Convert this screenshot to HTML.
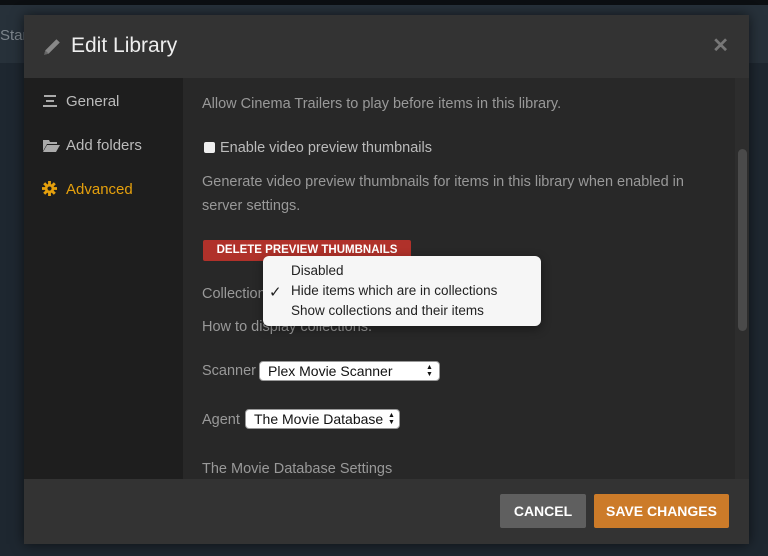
<!DOCTYPE html>
<html><head><style>
*{margin:0;padding:0;box-sizing:border-box}
body{width:768px;height:556px;overflow:hidden;background:#1e2730;font-family:"Liberation Sans",sans-serif;position:relative}
.top{position:absolute;left:0;top:0;width:768px;height:5px;background:#0c0f12}
.band{position:absolute;left:0;top:5px;width:768px;height:58px;background:#27313a}
.star{position:absolute;left:0;top:27px;color:#7d858c;font-size:15px}
.dlg{position:absolute;left:24px;top:15px;width:725px;height:529px;background:#282828;box-shadow:0 0 12px rgba(0,0,0,.6)}
.hdr{position:absolute;left:0;top:0;width:725px;height:63px;background:#333}
.hdr h1{position:absolute;left:47px;top:19px;font-size:21px;font-weight:normal;color:#eee}
.x{position:absolute;right:20px;top:18px;color:#777;font-size:20px;font-weight:bold}
.side{position:absolute;left:0;top:63px;width:159px;height:401px;background:#1e1e1e}
.nav{position:absolute;left:42px;font-size:15px;color:#bbb}
.body{position:absolute;left:159px;top:63px;width:552px;height:401px;background:#282828;color:#999;font-size:14.5px}
.t{position:absolute;left:19px;white-space:nowrap}
.sb{position:absolute;left:711px;top:63px;width:14px;height:401px;background:#2d2d2d}
.thumb{position:absolute;left:3px;top:71px;width:9px;height:182px;border-radius:5px;background:#4a4a4a}
.ftr{position:absolute;left:0;top:464px;width:725px;height:65px;background:#333}
.btn{position:absolute;top:15px;height:34px;color:#fff;font-weight:bold;font-size:14px;text-align:center;line-height:34px;border-radius:2px}
.sel{position:absolute;background:#fff;border:1px solid #999;border-radius:4px;color:#111;font-size:14px;height:20px;line-height:18px;padding-left:8px}
.menu{position:absolute;left:263px;top:256px;width:278px;height:70px;background:#f6f6f6;border-radius:6px;box-shadow:0 3px 10px rgba(0,0,0,.4);font-size:13.5px;color:#222}
.menu div{position:absolute;left:28px}
</style></head><body>
<div class="top"></div><div class="band"></div><div class="star">Star</div>
<div class="dlg">
 <div class="hdr">
  <svg style="position:absolute;left:18px;top:22px" width="20" height="20" viewBox="0 0 18 18"><path d="M2 16l1-4L13 2l3 3L6 15z" fill="#888"/><path d="M2 16l1-4 3 3z" fill="#666"/></svg>
  <h1>Edit Library</h1><div class="x">✕</div>
 </div>
 <div class="side">
  <svg style="position:absolute;left:19px;top:17px" width="14" height="12"><rect x="1" y="0" width="12" height="2" fill="#aaa"/><rect x="3" y="5" width="8" height="2" fill="#aaa"/><rect x="0" y="10" width="14" height="2" fill="#aaa"/></svg>
  <div class="nav" style="top:15px">General</div>
  <svg style="position:absolute;left:19px;top:61px" width="17" height="13"><path d="M0 1h6l1 2h7v2H4L0 12z" fill="#aaa"/><path d="M4 6h13l-4 7H0z" fill="#aaa"/></svg>
  <div class="nav" style="top:59px">Add folders</div>
  <svg style="position:absolute;left:18px;top:103px" width="15" height="15" viewBox="0 0 16 16"><g fill="#e5a00d"><circle cx="8" cy="8" r="5"/><rect x="6.5" y="0" width="3" height="16"/><rect x="0" y="6.5" width="16" height="3"/><rect x="6.5" y="0" width="3" height="16" transform="rotate(45 8 8)"/><rect x="6.5" y="0" width="3" height="16" transform="rotate(-45 8 8)"/></g><circle cx="8" cy="8" r="2.2" fill="#1e1e1e"/></svg>
  <div class="nav" style="top:103px;color:#e5a00d">Advanced</div>
 </div>
 <div class="body">
  <div class="t" style="top:18px">Allow Cinema Trailers to play before items in this library.</div>
  <div style="position:absolute;left:21px;top:64px;width:11px;height:11px;background:#eee;border-radius:2px"></div>
  <div class="t" style="left:37px;top:62px;color:#bbb">Enable video preview thumbnails</div>
  <div class="t" style="top:96px">Generate video preview thumbnails for items in this library when enabled in</div>
  <div class="t" style="top:120px">server settings.</div>
  <div style="position:absolute;left:20px;top:162px;width:208px;height:21px;background:#b0312a;border-radius:2px;color:#fff;font-weight:bold;font-size:11.5px;line-height:21px;text-align:center">DELETE PREVIEW THUMBNAILS</div>
  <div class="t" style="top:208px">Collections</div>
  <div class="t" style="top:241px">How to display collections.</div>
  <div class="t" style="top:285px">Scanner</div>
  <div class="t" style="top:334px">Agent</div>
  <div class="t" style="top:383px">The Movie Database Settings</div>
 </div>
 <div class="sb"><div class="thumb"></div></div>
 <div class="ftr">
  <div class="btn" style="left:476px;width:86px;background:#5f5f5f">CANCEL</div>
  <div class="btn" style="left:570px;width:135px;background:#cc7b29">SAVE CHANGES</div>
 </div>
</div>
<div class="sel" style="left:259px;top:361px;width:181px">Plex Movie Scanner</div>
<div class="sel" style="left:245px;top:409px;width:155px">The Movie Database</div>
<div style="position:absolute;left:426px;top:364px;font-size:7px;line-height:7px;color:#111">▲<br>▼</div>
<div style="position:absolute;left:388px;top:412px;font-size:7px;line-height:7px;color:#111">▲<br>▼</div>
<div class="menu">
 <div style="top:7px">Disabled</div>
 <div style="left:6px;top:27px;font-size:15px">✓</div>
 <div style="top:27px">Hide items which are in collections</div>
 <div style="top:47px">Show collections and their items</div>
</div>
</body></html>
